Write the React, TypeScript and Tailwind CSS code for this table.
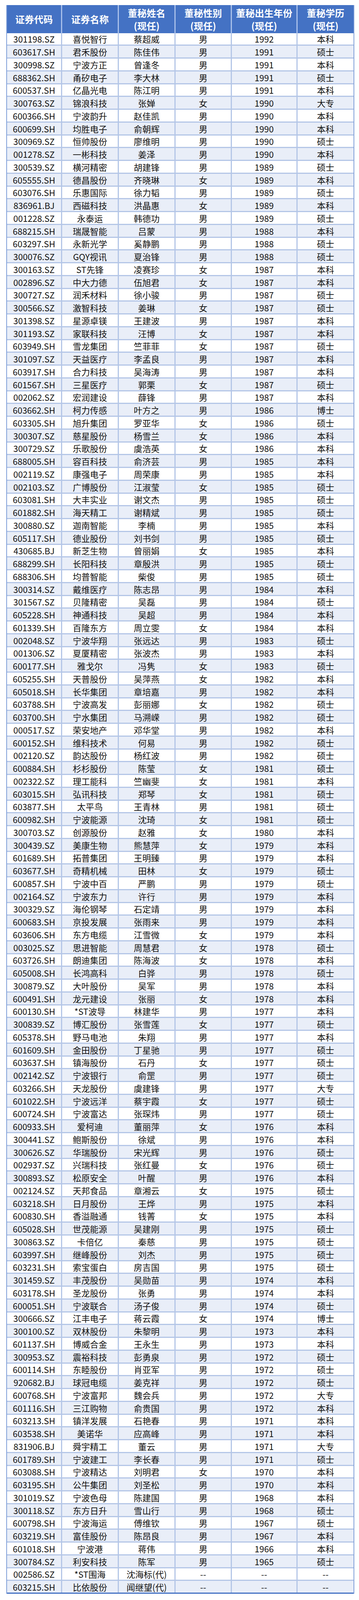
import React from "react";

type Row = [string, string, string, string, string, string];

const rows: Row[] = [
  ["301198.SZ", "喜悦智行", "蔡超威", "男", "1992", "本科"],
  ["603617.SH", "君禾股份", "陈佳伟", "男", "1991", "硕士"],
  ["300998.SZ", "宁波方正", "曾逢冬", "男", "1991", "本科"],
  ["688362.SH", "甬矽电子", "李大林", "男", "1991", "硕士"],
  ["600537.SH", "亿晶光电", "陈江明", "男", "1991", "本科"],
  ["300763.SZ", "锦浪科技", "张婵", "女", "1990", "大专"],
  ["600366.SH", "宁波韵升", "赵佳凯", "男", "1990", "本科"],
  ["600699.SH", "均胜电子", "俞朝辉", "男", "1990", "本科"],
  ["300969.SZ", "恒帅股份", "廖维明", "男", "1990", "硕士"],
  ["001278.SZ", "一彬科技", "姜泽", "男", "1990", "本科"],
  ["300539.SZ", "横河精密", "胡建锋", "男", "1989", "硕士"],
  ["605555.SH", "德昌股份", "齐晓琳", "女", "1989", "本科"],
  ["603076.SH", "乐惠国际", "徐力韬", "男", "1989", "硕士"],
  ["836961.BJ", "西磁科技", "洪晶惠", "女", "1989", "本科"],
  ["001228.SZ", "永泰运", "韩德功", "男", "1989", "硕士"],
  ["688215.SH", "瑞晟智能", "吕蒙", "男", "1988", "本科"],
  ["603297.SH", "永新光学", "奚静鹏", "男", "1988", "硕士"],
  ["300076.SZ", "GQY视讯", "夏治锋", "男", "1988", "硕士"],
  ["300163.SZ", "ST先锋", "凌赛珍", "女", "1987", "本科"],
  ["002896.SZ", "中大力德", "伍旭君", "女", "1987", "本科"],
  ["300727.SZ", "润禾材料", "徐小骏", "男", "1987", "硕士"],
  ["300566.SZ", "激智科技", "姜琳", "女", "1987", "硕士"],
  ["301398.SZ", "星源卓镁", "王建波", "男", "1987", "本科"],
  ["301193.SZ", "家联科技", "汪博", "女", "1987", "本科"],
  ["603949.SH", "雪龙集团", "竺菲菲", "女", "1987", "硕士"],
  ["301097.SZ", "天益医疗", "李孟良", "男", "1987", "本科"],
  ["603917.SH", "合力科技", "吴海涛", "男", "1987", "本科"],
  ["601567.SH", "三星医疗", "郭栗", "女", "1987", "硕士"],
  ["002062.SZ", "宏润建设", "薛锋", "男", "1987", "本科"],
  ["603662.SH", "柯力传感", "叶方之", "男", "1986", "博士"],
  ["603305.SH", "旭升集团", "罗亚华", "女", "1986", "硕士"],
  ["300307.SZ", "慈星股份", "杨雪兰", "女", "1986", "本科"],
  ["300729.SZ", "乐歌股份", "虞浩英", "女", "1986", "本科"],
  ["688005.SH", "容百科技", "俞济芸", "男", "1985", "本科"],
  ["002119.SZ", "康强电子", "周荣康", "男", "1985", "本科"],
  ["002103.SZ", "广博股份", "江淑莹", "女", "1985", "硕士"],
  ["603081.SH", "大丰实业", "谢文杰", "男", "1985", "硕士"],
  ["601882.SH", "海天精工", "谢精斌", "男", "1985", "硕士"],
  ["300880.SZ", "迦南智能", "李楠", "男", "1985", "本科"],
  ["605117.SH", "德业股份", "刘书剑", "男", "1985", "硕士"],
  ["430685.BJ", "新芝生物", "曾丽娟", "女", "1985", "本科"],
  ["688299.SH", "长阳科技", "章殷洪", "男", "1985", "硕士"],
  ["688306.SH", "均普智能", "柴俊", "男", "1985", "硕士"],
  ["300314.SZ", "戴维医疗", "陈志昂", "男", "1984", "本科"],
  ["301567.SZ", "贝隆精密", "吴磊", "男", "1984", "硕士"],
  ["605228.SH", "神通科技", "吴超", "男", "1984", "本科"],
  ["601339.SH", "百隆东方", "周立雯", "女", "1984", "本科"],
  ["002048.SZ", "宁波华翔", "张远达", "男", "1983", "硕士"],
  ["001306.SZ", "夏厦精密", "张波杰", "男", "1983", "本科"],
  ["600177.SH", "雅戈尔", "冯隽", "女", "1983", "硕士"],
  ["605255.SH", "天普股份", "吴萍燕", "女", "1982", "本科"],
  ["605018.SH", "长华集团", "章培嘉", "男", "1982", "本科"],
  ["603788.SH", "宁波高发", "彭丽娜", "女", "1982", "硕士"],
  ["603700.SH", "宁水集团", "马溯嵘", "男", "1982", "硕士"],
  ["000517.SZ", "荣安地产", "邓华堂", "男", "1982", "本科"],
  ["600152.SH", "维科技术", "何易", "男", "1982", "硕士"],
  ["002120.SZ", "韵达股份", "杨红波", "男", "1982", "硕士"],
  ["600884.SH", "杉杉股份", "陈莹", "女", "1981", "硕士"],
  ["002322.SZ", "理工能科", "竺幽斐", "女", "1981", "本科"],
  ["603015.SH", "弘讯科技", "郑琴", "女", "1981", "硕士"],
  ["603877.SH", "太平鸟", "王青林", "男", "1981", "硕士"],
  ["600982.SH", "宁波能源", "沈琦", "女", "1981", "硕士"],
  ["300703.SZ", "创源股份", "赵雅", "女", "1980", "本科"],
  ["300439.SZ", "美康生物", "熊慧萍", "女", "1979", "本科"],
  ["601689.SH", "拓普集团", "王明臻", "男", "1979", "本科"],
  ["603677.SH", "奇精机械", "田林", "女", "1979", "硕士"],
  ["600857.SH", "宁波中百", "严鹏", "男", "1979", "硕士"],
  ["002164.SZ", "宁波东力", "许行", "男", "1979", "本科"],
  ["300329.SZ", "海伦钢琴", "石定靖", "男", "1979", "本科"],
  ["600683.SH", "京投发展", "张雨来", "男", "1979", "本科"],
  ["603606.SH", "东方电缆", "江雪微", "女", "1979", "本科"],
  ["003025.SZ", "思进智能", "周慧君", "女", "1978", "硕士"],
  ["603726.SH", "朗迪集团", "陈海波", "女", "1978", "本科"],
  ["605008.SH", "长鸿高科", "白骅", "男", "1978", "硕士"],
  ["300879.SZ", "大叶股份", "吴军", "男", "1978", "本科"],
  ["600491.SH", "龙元建设", "张丽", "女", "1978", "本科"],
  ["600130.SH", "*ST波导", "林建华", "男", "1977", "本科"],
  ["300839.SZ", "博汇股份", "张雪莲", "女", "1977", "硕士"],
  ["605378.SH", "野马电池", "朱翔", "男", "1977", "本科"],
  ["601609.SH", "金田股份", "丁星驰", "男", "1977", "硕士"],
  ["603637.SH", "镇海股份", "石丹", "女", "1977", "硕士"],
  ["002142.SZ", "宁波银行", "俞罡", "男", "1977", "硕士"],
  ["603266.SH", "天龙股份", "虞建锋", "男", "1977", "大专"],
  ["601022.SH", "宁波远洋", "蔡宇霞", "女", "1977", "硕士"],
  ["600724.SH", "宁波富达", "张琛炜", "男", "1977", "硕士"],
  ["600933.SH", "爱柯迪", "董丽萍", "女", "1976", "本科"],
  ["300441.SZ", "鲍斯股份", "徐斌", "男", "1976", "本科"],
  ["300626.SZ", "华瑞股份", "宋光辉", "男", "1976", "硕士"],
  ["002937.SZ", "兴瑞科技", "张红曼", "女", "1976", "硕士"],
  ["300893.SZ", "松原安全", "叶醒", "男", "1976", "本科"],
  ["002124.SZ", "天邦食品", "章湘云", "女", "1975", "硕士"],
  ["603218.SH", "日月股份", "王烨", "男", "1975", "本科"],
  ["600830.SH", "香溢融通", "钱菁", "女", "1975", "本科"],
  ["605028.SH", "世茂能源", "吴建刚", "男", "1975", "硕士"],
  ["300863.SZ", "卡倍亿", "秦慈", "男", "1975", "硕士"],
  ["603997.SH", "继峰股份", "刘杰", "男", "1975", "硕士"],
  ["603231.SH", "索宝蛋白", "房吉国", "男", "1975", "硕士"],
  ["301459.SZ", "丰茂股份", "吴勋苗", "男", "1974", "本科"],
  ["603178.SH", "圣龙股份", "张勇", "男", "1974", "本科"],
  ["600051.SH", "宁波联合", "汤子俊", "男", "1974", "硕士"],
  ["300666.SZ", "江丰电子", "蒋云霞", "女", "1974", "博士"],
  ["300100.SZ", "双林股份", "朱黎明", "男", "1973", "本科"],
  ["601137.SH", "博威合金", "王永生", "男", "1973", "本科"],
  ["300953.SZ", "震裕科技", "彭勇泉", "男", "1972", "硕士"],
  ["600114.SH", "东睦股份", "肖亚军", "男", "1972", "硕士"],
  ["920682.BJ", "球冠电缆", "姜克祥", "男", "1972", "硕士"],
  ["600768.SH", "宁波富邦", "魏会兵", "男", "1972", "大专"],
  ["601116.SH", "三江购物", "俞贵国", "男", "1972", "本科"],
  ["603213.SH", "镇洋发展", "石艳春", "男", "1971", "本科"],
  ["603538.SH", "美诺华", "应高峰", "男", "1971", "本科"],
  ["831906.BJ", "舜宇精工", "董云", "男", "1971", "大专"],
  ["601789.SH", "宁波建工", "李长春", "男", "1971", "硕士"],
  ["603088.SH", "宁波精达", "刘明君", "女", "1970", "本科"],
  ["603195.SH", "公牛集团", "刘圣松", "男", "1970", "本科"],
  ["301019.SZ", "宁波色母", "陈建国", "男", "1968", "本科"],
  ["300118.SZ", "东方日升", "雪山行", "男", "1968", "硕士"],
  ["600798.SH", "宁波海运", "傅维钦", "男", "1967", "硕士"],
  ["603219.SH", "富佳股份", "陈昂良", "男", "1967", "本科"],
  ["601018.SH", "宁波港", "蒋伟", "男", "1966", "本科"],
  ["300784.SZ", "利安科技", "陈军", "男", "1965", "硕士"],
  ["002586.SZ", "*ST围海", "沈海标(代)", "--", "--", "--"],
  ["603215.SH", "比依股份", "闻继望(代)", "--", "--", "--"],
];

const headers: string[][] = [
  ["证券代码"],
  ["证券名称"],
  ["董秘姓名", "(现任)"],
  ["董秘性别", "(现任)"],
  ["董秘出生年份", "(现任)"],
  ["董秘学历", "(现任)"],
];

function Cell({ text, last }: { text: string; last: boolean }) {
  return (
    <div
      className={
        last
          ? "flex items-center justify-center overflow-hidden text-[22px] leading-[28px] text-[#111111]"
          : "flex items-center justify-center overflow-hidden text-[22px] leading-[28px] text-[#111111] border-r-[3px] border-[#B4C6E7]"
      }
    >
      {text}
    </div>
  );
}

export default function App() {
  return (
    <div
      className="w-[918px] bg-white pt-[13px] pl-[16px]"
      style={{ fontFamily: '"Noto Sans CJK SC", "Noto Sans", sans-serif' }}
    >
      <div className="w-[890px] flex flex-col border-x-2 border-[#7F9FD8]">
        <div className="grid grid-cols-[141px_145px_145px_144px_168px_1fr] h-[71.5px] shrink-0 bg-[#4472C4]">
          {headers.map((h, i) => (
            <div
              key={i}
              className={
                i < 5
                  ? "flex flex-col items-center justify-center text-white font-bold text-[24px] leading-[33px] border-r-[3px] border-[#A9C0EA]"
                  : "flex flex-col items-center justify-center text-white font-bold text-[24px] leading-[33px]"
              }
            >
              {h.map((line, j) => (
                <span key={j}>{line}</span>
              ))}
            </div>
          ))}
        </div>
        {rows.map((r, i) => {
          const last = i === rows.length - 1;
          const stripe = i % 2 === 1;
          return (
            <div
              key={r[0]}
              className={
                (last ? "border-[#4472C4] " : "border-[#B4C6E7] ") +
                (stripe ? "bg-[#E9EEF8] " : "bg-white ") +
                "grid grid-cols-[141px_145px_145px_144px_168px_1fr] h-[32.75px] shrink-0 overflow-hidden border-b-[3px]"
              }
            >
              {r.map((c, j) => (
                <Cell key={j} text={c} last={j === 5} />
              ))}
            </div>
          );
        })}
      </div>
    </div>
  );
}
